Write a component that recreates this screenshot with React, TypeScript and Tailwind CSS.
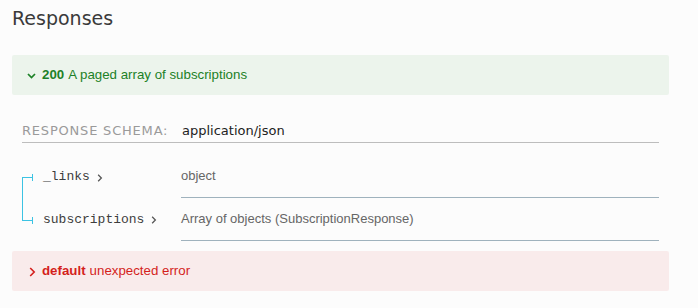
import React from "react";

function ChevronDown({ className }: { className?: string }) {
  return (
    <svg width="9" height="6" viewBox="0 0 9 6" className={className}>
      <path d="M1 1 L4.5 4.6 L8 1" fill="none" stroke="currentColor" strokeWidth="1.7" />
    </svg>
  );
}

function ChevronRight({ className, w = 7, h = 10 }: { className?: string; w?: number; h?: number }) {
  return (
    <svg width={w} height={h} viewBox="0 0 7 10" className={className}>
      <path d="M1.2 1 L5.2 5 L1.2 9" fill="none" stroke="currentColor" strokeWidth="1.6" />
    </svg>
  );
}

function PropRow({
  name,
  type,
  first,
}: {
  name: string;
  type: string;
  first?: boolean;
}) {
  return (
    <div className={`flex ${first ? "h-[42px]" : "h-[43px]"}`}>
      <div className="relative flex w-[159px] items-center pl-[21px]">
        {first ? (
          <span className="absolute left-0 top-1/2 bottom-0 w-px bg-[#3cc3e3]" />
        ) : (
          <span className="absolute left-0 top-0 h-1/2 w-px bg-[#3cc3e3]" />
        )}
        <span className="absolute left-0 top-1/2 h-px w-[10px] bg-[#3cc3e3]" />
        <span className="absolute left-[10px] top-[calc(50%-3px)] h-[7px] w-px bg-[#3cc3e3]" />
        <span className="font-['Liberation_Mono',monospace] text-[13px] text-[#3d3d3d]">{name}</span>
        <ChevronRight className="ml-[7px] mt-[1px] text-[#555]" w={6} h={8} />
      </div>
      <div className="flex flex-1 items-center border-b border-[#9fb2bd] pb-[1px] font-['Liberation_Sans',Arial,sans-serif] text-[13px] text-[#666]">
        {type}
      </div>
    </div>
  );
}

export default function App() {
  return (
    <div className="min-h-[308px] w-[698px] bg-[#fcfcfc] pl-[12px] pt-[4px]">
      <h3 className="h-[51px] pt-[1px] font-['DejaVu_Sans',sans-serif] text-[19px] font-normal leading-[26px] text-[#3a3a3a]">
        Responses
      </h3>

      <div className="flex h-[40px] w-[657px] items-center rounded-[2px] bg-[#ecf4ec] pl-[15px] font-['Liberation_Sans',Arial,sans-serif] text-[13.3px] text-[#1d8127]">
        <ChevronDown className="mr-[6px] mt-[1px]" />
        <span className="font-bold">200</span>
        <span className="ml-[4px]">A paged array of subscriptions</span>
      </div>

      <div className="w-[657px] px-[10px]">
        <div className="mt-[25px] flex h-[23px] items-center border-b border-[#bdbdbd]">
          <span className="w-[160px] font-['DejaVu_Sans',sans-serif] text-[13px] uppercase tracking-[0.8px] text-[#9a9a9a]">
            Response Schema:
          </span>
          <span className="font-['DejaVu_Sans',sans-serif] text-[13px] text-[#222]">application/json</span>
        </div>

        <div className="mt-[13px] flex flex-col">
          <PropRow name="_links" type="object" first />
          <PropRow name="subscriptions" type="Array of objects (SubscriptionResponse)" />
        </div>
      </div>

      <div className="mt-[10px] flex h-[40px] w-[657px] items-center rounded-[2px] bg-[#f9ebeb] pl-[17px] font-['Liberation_Sans',Arial,sans-serif] text-[13.3px] text-[#d41f1c]">
        <ChevronRight className="mr-[6px] mt-[1px]" w={7} h={10} />
        <span className="font-bold">default</span>
        <span className="ml-[4px]">unexpected error</span>
      </div>
    </div>
  );
}
